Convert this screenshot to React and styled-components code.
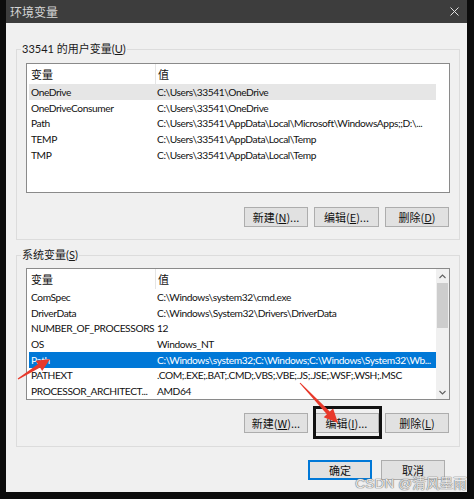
import React from 'react';
import styled, { createGlobalStyle } from 'styled-components';

const GlobalStyle = createGlobalStyle`
  html, body {
    margin: 0;
    padding: 0;
    background: #0c0c0c;
  }
  body {
    font-family: Lato, "Noto Sans CJK SC", sans-serif;
  }
`;

const Screen = styled.div`
  position: relative;
  width: 474px;
  height: 499px;
  padding-left: 6px;
  box-sizing: border-box;
  background: #0c0c0c;
  overflow: hidden;
`;

const Dialog = styled.div`
  width: 461px;
  height: 492px;
  background: #f0f0f0;
  display: flex;
  flex-direction: column;
`;

const TitleBar = styled.div`
  height: 23px;
  flex: none;
  background: #3d3d3d;
  color: #d6d6d6;
  display: flex;
  align-items: center;
  justify-content: space-between;
  padding: 0 8px 0 4px;
  font-family: "Noto Sans CJK SC", sans-serif;
  font-size: 12px;
`;

const Body = styled.div`
  display: flex;
  flex-direction: column;
  padding: 0 7px 0 10px;
`;

const GroupBox = styled.fieldset`
  margin: ${props => props.top}px 0 0;
  padding: ${props => props.pt}px 9px ${props => props.pb}px;
  border: 1px solid #dcdcdc;
  min-width: 0;
  display: flex;
  flex-direction: column;
`;

const Legend = styled.legend`
  margin-left: -5px;
  padding: 0 1px;
  height: 14px;
  line-height: 14px;
  font-family: Lato, "Noto Sans CJK SC", sans-serif;
  font-size: 11px;
  color: #1a1a1a;
`;

const ListView = styled.div`
  height: ${props => props.h}px;
  box-sizing: border-box;
  border: 1px solid #8a8a8a;
  background: #fff;
  display: flex;
  padding-left: 2px;
`;

const Rows = styled.div`
  width: 407px;
  display: flex;
  flex-direction: column;
`;

const Row = styled.div`
  display: grid;
  grid-template-columns: 126px 281px;
  height: ${props => (props.header ? 20 : 15.8)}px;
  align-items: center;
  font-size: ${props => (props.header ? 11 : 10.2)}px;
  letter-spacing: ${props => (props.header ? 0 : -0.4)}px;
  white-space: nowrap;
  overflow: hidden;
  background: ${props => (props.selected ? '#0078d7' : props.hover ? '#e6e6e6' : 'transparent')};
  color: ${props => (props.selected ? '#fff' : '#111')};
  font-family: ${props =>
    props.header ? '"Noto Sans CJK SC", sans-serif' : 'Lato, "Noto Sans CJK SC", sans-serif'};
`;

const Cell = styled.span`
  padding-left: 2px;
  overflow: hidden;
`;

const HeaderCell = styled.span`
  padding-left: 2px;
  border-left: 1px solid #e5e5e5;
  height: 100%;
  display: flex;
  align-items: center;
`;

const ScrollBar = styled.div`
  margin-left: auto;
  width: 13px;
  background: #f0f0f0;
  display: flex;
  flex-direction: column;
  align-items: center;
`;

const ScrollArrow = styled.div`
  height: 14px;
  width: 13px;
  display: flex;
  align-items: center;
  justify-content: center;
`;

const Thumb = styled.div`
  width: 11px;
  height: 45px;
  background: #cdcdcd;
`;

const Track = styled.div`
  flex: 1;
`;

const ButtonRow = styled.div`
  display: flex;
  justify-content: flex-end;
  gap: 6px;
  margin-top: ${props => props.mt}px;
  padding-right: 1px;
`;

const Button = styled.div`
  width: ${props => props.w || 65}px;
  height: 20px;
  box-sizing: border-box;
  background: #e1e1e1;
  border: ${props => (props.focused ? '2px solid #0078d7' : '1px solid #adadad')};
  display: flex;
  align-items: center;
  justify-content: center;
  font-family: "Noto Sans CJK SC", sans-serif;
  font-size: 11px;
  color: #111;
  u {
    text-decoration: underline;
    text-underline-offset: 1px;
  }
`;

const Footer = styled.div`
  display: flex;
  justify-content: flex-end;
  gap: 9px;
  margin-top: 13px;
  padding-right: 15px;
`;

const Overlay = styled.svg`
  position: absolute;
  left: 0;
  top: 0;
  pointer-events: none;
`;

const Watermark = styled.span`
  position: absolute;
  right: 7px;
  bottom: 7px;
  font-family: "Liberation Sans", "Noto Sans CJK SC", sans-serif;
  font-size: 13.5px;
  letter-spacing: 0.2px;
  color: rgba(255, 255, 255, 0.85);
  text-shadow: 0 0 1px #777, 0 0 1px #777, 0 0 1px #888;
`;

const userVars = [
  ['OneDrive', 'C:\\Users\\33541\\OneDrive'],
  ['OneDriveConsumer', 'C:\\Users\\33541\\OneDrive'],
  ['Path', 'C:\\Users\\33541\\AppData\\Local\\Microsoft\\WindowsApps;;D:\\...'],
  ['TEMP', 'C:\\Users\\33541\\AppData\\Local\\Temp'],
  ['TMP', 'C:\\Users\\33541\\AppData\\Local\\Temp'],
];

const systemVars = [
  ['ComSpec', 'C:\\Windows\\system32\\cmd.exe'],
  ['DriverData', 'C:\\Windows\\System32\\Drivers\\DriverData'],
  ['NUMBER_OF_PROCESSORS', '12'],
  ['OS', 'Windows_NT'],
  ['Path', 'C:\\Windows\\system32;C:\\Windows;C:\\Windows\\System32\\Wb...'],
  ['PATHEXT', '.COM;.EXE;.BAT;.CMD;.VBS;.VBE;.JS;.JSE;.WSF;.WSH;.MSC'],
  ['PROCESSOR_ARCHITECT...', 'AMD64'],
];

const Chevron = ({ up }) => (
  <svg width="7" height="5" viewBox="0 0 7 5">
    <path
      d={up ? 'M0.5 4 L3.5 1 L6.5 4' : 'M0.5 1 L3.5 4 L6.5 1'}
      fill="none"
      stroke="#606060"
      strokeWidth="1.1"
    />
  </svg>
);

const VarList = ({ rows, height, hoverIndex, selectedIndex, scroll }) => (
  <ListView h={height}>
    <Rows>
      <Row header>
        <Cell>变量</Cell>
        <HeaderCell>值</HeaderCell>
      </Row>
      {rows.map(([name, value], i) => (
        <Row key={name} hover={i === hoverIndex} selected={i === selectedIndex}>
          <Cell>{name}</Cell>
          <Cell>{value}</Cell>
        </Row>
      ))}
    </Rows>
    {scroll && (
      <ScrollBar>
        <ScrollArrow>
          <Chevron up />
        </ScrollArrow>
        <Thumb />
        <Track />
        <ScrollArrow>
          <Chevron />
        </ScrollArrow>
      </ScrollBar>
    )}
  </ListView>
);

const Label = ({ text, hotkey, tail = '' }) => (
  <span>
    {text}(<u>{hotkey}</u>){tail}
  </span>
);

export default function App() {
  return (
    <>
      <GlobalStyle />
      <Screen>
        <Dialog>
          <TitleBar>
            <span>环境变量</span>
            <svg width="9" height="9" viewBox="0 0 9 9">
              <path d="M0.5 0.5 L8.5 8.5 M8.5 0.5 L0.5 8.5" stroke="#e0e0e0" strokeWidth="1" />
            </svg>
          </TitleBar>
          <Body>
            <GroupBox top={19} pt={7} pb={12}>
              <Legend>
                33541 的用户变量(<u>U</u>)
              </Legend>
              <VarList rows={userVars} height={130} hoverIndex={0} />
              <ButtonRow mt={14}>
                <Button w={64}>
                  <Label text="新建" hotkey="N" tail="..." />
                </Button>
                <Button>
                  <Label text="编辑" hotkey="E" tail="..." />
                </Button>
                <Button w={64}>
                  <Label text="删除" hotkey="D" />
                </Button>
              </ButtonRow>
            </GroupBox>
            <GroupBox top={8} pt={6} pb={13}>
              <Legend>
                系统变量(<u>S</u>)
              </Legend>
              <VarList rows={systemVars} height={132} selectedIndex={4} scroll />
              <ButtonRow mt={13}>
                <Button w={64}>
                  <Label text="新建" hotkey="W" tail="..." />
                </Button>
                <Button>
                  <Label text="编辑" hotkey="I" tail="..." />
                </Button>
                <Button w={64}>
                  <Label text="删除" hotkey="L" />
                </Button>
              </ButtonRow>
            </GroupBox>
            <Footer>
              <Button w={64} focused>
                确定
              </Button>
              <Button w={64}>取消</Button>
            </Footer>
          </Body>
        </Dialog>

        <Overlay width="474" height="499" viewBox="0 0 474 499">
          <rect x="314.5" y="407.5" width="66" height="30" fill="none" stroke="#111" strokeWidth="3" />
          <polygon
            fill="#e8392b"
            points="18.3,379.4 40.1,367.6 42.2,371 50,359 35.8,360.8 37.9,364.2 17.7,378.6"
          />
          <polygon
            fill="#e8392b"
            points="299.6,383.3 326.9,414.3 323.7,417.3 338,423 333.1,408.4 329.8,411.5 300.4,382.7"
          />
        </Overlay>
        <Watermark>CSDN @清风墨雨</Watermark>
      </Screen>
    </>
  );
}
